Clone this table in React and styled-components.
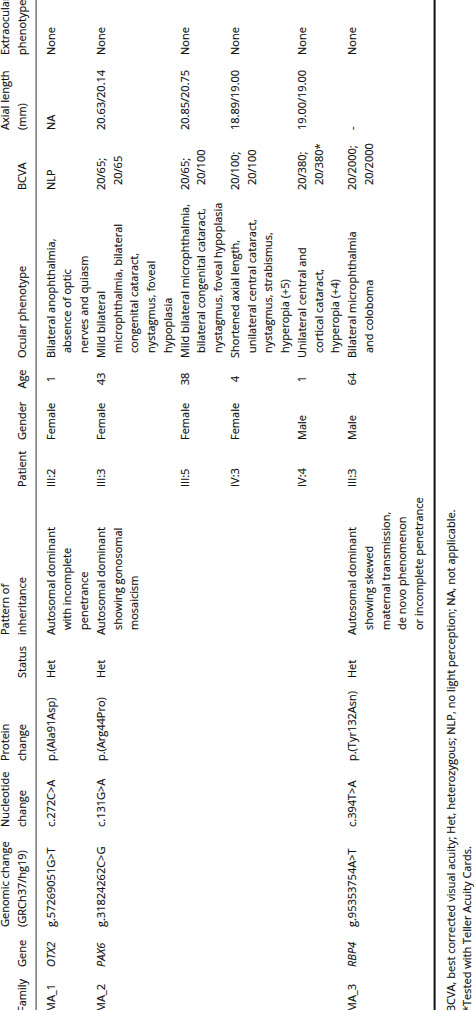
import styled, { createGlobalStyle } from "styled-components";

const cols = [45, 40, 100, 66, 83, 43, 148, 47, 50, 32, 168, 60, 75, 80];
const template = cols.map((c) => c + "px").join(" ");
const AGE = 9;

const head = [
  ["Family"],
  ["Gene"],
  ["Genomic change", "(GRCh37/hg19)"],
  ["Nucleotide", "change"],
  ["Protein", "change"],
  ["Status"],
  ["Pattern of", "inheritance"],
  ["Patient"],
  ["Gender"],
  ["Age"],
  ["Ocular phenotype"],
  ["BCVA"],
  ["Axial length", "(mm)"],
  ["Extraocular", "phenotype"],
];

const rows = [
  [
    ["MA_1"], ["OTX2"], ["g.57269051G>T"], ["c.272C>A"], ["p.(Ala91Asp)"], ["Het"],
    ["Autosomal dominant", "with incomplete", "penetrance"],
    ["III:2"], ["Female"], ["1"],
    ["Bilateral anophthalmia,", "absence of optic", "nerves and quiasm"],
    ["NLP"], ["NA"], ["None"],
  ],
  [
    ["MA_2"], ["PAX6"], ["g.31824262C>G"], ["c.131G>A"], ["p.(Arg44Pro)"], ["Het"],
    ["Autosomal dominant", "showing gonosomal", "mosaicism"],
    ["III:3"], ["Female"], ["43"],
    ["Mild bilateral", "microphthalmia, bilateral", "congenital cataract,", "nystagmus, foveal", "hypoplasia"],
    ["20/65;", "20/65"], ["20.63/20.14"], ["None"],
  ],
  [
    [], [], [], [], [], [], [],
    ["III:5"], ["Female"], ["38"],
    ["Mild bilateral microphthalmia,", "bilateral congenital cataract,", "nystagmus, foveal hypoplasia"],
    ["20/65;", "20/100"], ["20.85/20.75"], ["None"],
  ],
  [
    [], [], [], [], [], [], [],
    ["IV:3"], ["Female"], ["4"],
    ["Shortened axial length,", "unilateral central cataract,", "nystagmus, strabismus,", "hyperopia (+5)"],
    ["20/100;", "20/100"], ["18.89/19.00"], ["None"],
  ],
  [
    [], [], [], [], [], [], [],
    ["IV:4"], ["Male"], ["1"],
    ["Unilateral central and", "cortical cataract,", "hyperopia (+4)"],
    ["20/380;", "20/380*"], ["19.00/19.00"], ["None"],
  ],
  [
    ["MA_3"], ["RBP4"], ["g.95353754A>T"], ["c.394T>A"], ["p.(Tyr132Asn)"], ["Het"],
    ["Autosomal dominant", "showing skewed", "maternal transmission,", "de novo phenomenon", "or incomplete penetrance"],
    ["III:3"], ["Male"], ["64"],
    ["Bilateral microphthalmia", "and coloboma"],
    ["20/2000;", "20/2000"], ["-"], ["None"],
  ],
];

function Lines({ lines }) {
  return lines.map((l, i) => (
    <span key={i}>
      {i > 0 && <br />}
      {l}
    </span>
  ));
}

export default function App() {
  return (
    <>
      <Global />
      <Viewport>
        <Sheet>
          <HeadRow>
            {head.map((h, i) => (
              <HeadCell key={i} $center={i === AGE}>
                <Lines lines={h} />
              </HeadCell>
            ))}
          </HeadRow>
          <Body>
            {rows.map((r, ri) => (
              <Row key={ri}>
                {r.map((c, ci) => (
                  <Cell key={ci} $center={ci === AGE} $italic={ci === 1}>
                    <Lines lines={c} />
                  </Cell>
                ))}
              </Row>
            ))}
          </Body>
          <Notes>
            <Note>BCVA, best corrected visual acuity; Het, heterozygous; NLP, no light perception; NA, not applicable.</Note>
            <Note>*Tested with Teller Acuity Cards.</Note>
          </Notes>
        </Sheet>
      </Viewport>
    </>
  );
}

const Global = createGlobalStyle`
body {
  margin: 0;
  background: #fff;
}
`;
const Viewport = styled.div`
width: 474px;
height: 1010px;
overflow: hidden;
background: #fff;
`;
// the table is printed sideways: laid out normally, then turned a quarter turn
const Sheet = styled.div`
width: 1034px;
transform-origin: 0 0;
transform: translate(-3.4px, 1012px) rotate(-90deg);
font-family: "Open Sans", "Noto Sans", sans-serif;
font-size: 11px;
line-height: 16.75px;
color: #111;
-webkit-text-stroke: 0.15px #111;
`;
const HeadRow = styled.div`
display: grid;
grid-template-columns: ${template};
align-items: end;
padding-bottom: 5.6px;
border-bottom: 1.2px solid #333;
`;
const HeadCell = styled.div`
white-space: nowrap;
text-align: ${(p) => (p.$center ? "center" : "left")};
padding-right: ${(p) => (p.$center ? "10px" : "0")};
`;
const Body = styled.div`
padding: 5.6px 0 6.2px;
border-bottom: 2px solid #111;
`;
const Row = styled.div`
display: grid;
grid-template-columns: ${template};
align-items: start;
`;
const Cell = styled.div`
white-space: nowrap;
padding-left: ${(p) => (p.$center ? "0" : "5px")};
text-indent: ${(p) => (p.$center ? "0" : "-5px")};
text-align: ${(p) => (p.$center ? "center" : "left")};
padding-right: ${(p) => (p.$center ? "10px" : "0")};
font-style: ${(p) => (p.$italic ? "italic" : "normal")};
`;
const Notes = styled.div`
padding-top: 6.4px;
`;
const Note = styled.div`
white-space: nowrap;
`;
